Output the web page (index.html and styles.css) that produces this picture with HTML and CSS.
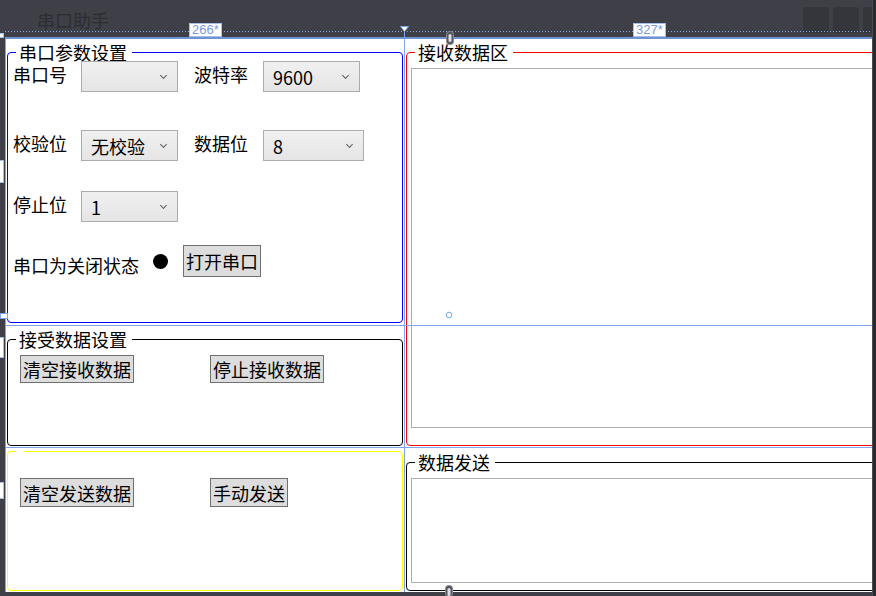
FILE: index.html
```html
<!DOCTYPE html>
<html lang="zh-CN">
<head>
    <meta charset="UTF-8">
    <meta name="viewport" content="width=device-width, initial-scale=1.0">
    <title>串口助手</title>
    <link rel="stylesheet" href="styles.css">
</head>
<body>
    <div class="frame">
        <div class="designer">
            <div class="titlebar">
                <span class="title">串口助手</span>
                <div class="winbtns"><span></span><span></span><span></span></div>
            </div>

            <div class="canvas">
                <!-- 串口参数 -->
                <fieldset class="group group-port">
                    <legend>串口参数设置</legend>
                    <div class="port-body">
                        <div class="row row-a">
                            <label class="lbl">串口号</label>
                            <div class="combo"><span class="val"></span><span class="chev"></span></div>
                            <label class="lbl lbl-2">波特率</label>
                            <div class="combo"><span class="val">9600</span><span class="chev"></span></div>
                        </div>
                        <div class="row row-b">
                            <label class="lbl">校验位</label>
                            <div class="combo"><span class="val">无校验</span><span class="chev"></span></div>
                            <label class="lbl lbl-2">数据位</label>
                            <div class="combo combo-wide"><span class="val">8</span><span class="chev"></span></div>
                        </div>
                        <div class="row row-c">
                            <label class="lbl">停止位</label>
                            <div class="combo"><span class="val">1</span><span class="chev"></span></div>
                        </div>
                        <div class="row row-d">
                            <span class="status">串口为关闭状态</span>
                            <span class="led"></span>
                            <button class="btn btn-open">打开串口</button>
                        </div>
                    </div>
                </fieldset>

                <!-- 接收数据区 -->
                <fieldset class="group group-recv">
                    <legend>接收数据区</legend>
                    <div class="box-body recv-body">
                        <textarea class="textbox" readonly></textarea>
                    </div>
                </fieldset>

                <!-- 接受数据设置 -->
                <fieldset class="group group-recvset">
                    <legend>接受数据设置</legend>
                    <div class="btn-row recvset-body">
                        <button class="btn">清空接收数据</button>
                        <button class="btn">停止接收数据</button>
                    </div>
                </fieldset>

                <!-- 发送按钮 -->
                <fieldset class="group group-sendset">
                    <legend></legend>
                    <div class="btn-row sendset-body">
                        <button class="btn">清空发送数据</button>
                        <button class="btn">手动发送</button>
                    </div>
                </fieldset>

                <!-- 数据发送 -->
                <fieldset class="group group-send">
                    <legend>数据发送</legend>
                    <div class="box-body send-body">
                        <textarea class="textbox" readonly></textarea>
                    </div>
                </fieldset>
            </div>

            <!-- designer adorners -->
            <div class="adorn dots"></div>
            <div class="adorn vline"></div>
            <div class="adorn hline hline-1"></div>
            <div class="adorn hline hline-2"></div>
            <span class="adorn size-tag tag-left">266*</span>
            <span class="adorn size-tag tag-right">327*</span>
            <svg class="adorn marker" width="9" height="6" viewBox="0 0 9 6">
                <path d="M0.5 0.5 H8.5 L4.5 5.5 Z" fill="#fff" stroke="#7fa5ec"/>
            </svg>
            <svg class="adorn grip grip-top" width="8" height="14" viewBox="0 0 8 14">
                <rect x="0.5" y="0.5" width="7" height="13" rx="3" fill="#55565c" stroke="#8a8b90"/>
                <rect x="2.5" y="3" width="3" height="8" rx="1.5" fill="#d8dce6"/>
            </svg>
            <svg class="adorn grip grip-bottom" width="8" height="11" viewBox="0 0 8 11">
                <rect x="0.5" y="0.5" width="7" height="11" rx="3" fill="#55565c" stroke="#8a8b90"/>
                <rect x="2.5" y="3" width="3" height="8" rx="1.5" fill="#d8dce6"/>
            </svg>
            <svg class="adorn ring" width="8" height="8" viewBox="0 0 8 8">
                <circle cx="4" cy="4" r="2.8" fill="#fff" stroke="#7fa5ec"/>
            </svg>
            <span class="adorn side side-1"></span>
            <span class="adorn side side-2"></span>
            <span class="adorn side side-3"></span>
            <span class="adorn side side-4"></span>
            <span class="adorn side-icon"></span>
        </div>
        <div class="edge"></div>
    </div>
</body>
</html>
```

FILE: styles.css
```css
* {
    box-sizing: border-box;
}

body {
    margin: 0;
    background-color: #3f4047;
    font-family: "Noto Sans CJK SC", "Microsoft YaHei", sans-serif;
    font-size: 18px;
    color: #000;
    overflow: hidden;
}

.frame {
    display: flex;
    width: 876px;
    height: 596px;
}

.designer {
    position: relative;
    width: 872px;
    height: 596px;
}

.edge {
    width: 4px;
    background-color: #2a2a2e;
    border-left: 1px solid #4b4c53;
}

/* title bar */
.titlebar {
    display: flex;
    height: 37px;
    padding-left: 37px;
    overflow: hidden;
}

.title {
    padding-top: 9px;
    line-height: 22px;
    color: #2c2d32;
}

.winbtns {
    display: flex;
    gap: 4px;
    margin-left: auto;
    margin-top: 7px;
    margin-right: -17px;
}

.winbtns span {
    width: 26px;
    height: 26px;
    border-radius: 3px;
    background-color: #35363b;
}

/* designer surface */
.canvas {
    display: grid;
    grid-template-columns: 399px 1fr;
    grid-template-rows: 287px 122px 1fr;
    height: 555px;
    margin-left: 5px;
    border-top: 2px solid #6d93d3;
    border-left: 1px solid #7fa5ec;
    background-color: #fff;
    overflow: hidden;
}

.group {
    display: flex;
    flex-direction: column;
    min-width: 0;
    margin: 0;
    padding: 0;
    border: 1px solid #000;
    border-radius: 4px;
}

.group legend {
    margin-left: 8px;
    padding: 0 5px 0 3px;
    font-size: 18px;
    line-height: 18px;
}

.group-port {
    grid-column: 1;
    grid-row: 1;
    margin: 4px 2px 3px 1px;
    border-color: #0000ff;
}

.group-recv {
    grid-column: 2;
    grid-row: 1 / 3;
    margin: 4px -30px 2px 1px;
    border-color: #ff0000;
}

.group-recvset {
    grid-column: 1;
    grid-row: 2;
    margin: 4px 2px 2px 1px;
}

.group-sendset {
    grid-column: 1;
    grid-row: 3;
    margin: 3px 2px 1px 1px;
    border-color: #ffff00;
}

.group-sendset legend {
    padding: 0 4px;
}

.group-send {
    grid-column: 2;
    grid-row: 3;
    margin: 5px -30px 1px 1px;
}

/* port settings */
.port-body {
    padding-left: 5px;
}

.row {
    display: flex;
    align-items: center;
    height: 31px;
}

.row-b {
    margin-top: 38px;
}

.row-c {
    margin-top: 30px;
}

.row-d {
    height: 32px;
    margin-top: 23px;
}

.lbl {
    width: 68px;
    line-height: 18px;
    margin-bottom: 6px;
}

.lbl-2 {
    width: 69px;
    margin-left: 16px;
}

.combo {
    display: flex;
    align-items: center;
    width: 97px;
    height: 31px;
    padding: 0 11px 0 9px;
    border: 1px solid #acacac;
    background: linear-gradient(#f0f0f0, #e5e5e5);
    line-height: 22px;
}

.combo-wide {
    width: 101px;
}

.combo .val {
    flex: 1;
}

.chev {
    width: 5px;
    height: 5px;
    margin-bottom: 3px;
    border-right: 1.5px solid #5f5f5f;
    border-bottom: 1.5px solid #5f5f5f;
    transform: rotate(45deg);
}

.status {
    line-height: 22px;
    margin-top: 8px;
}

.led {
    width: 15px;
    height: 15px;
    margin-left: 14px;
    border-radius: 50%;
    background-color: #000;
}

/* buttons */
.btn {
    height: 28px;
    padding: 0 2px;
    border: 1px solid #707070;
    background-color: #dddddd;
    font-family: inherit;
    font-size: 18px;
    line-height: 22px;
    color: #000;
}

.btn-open {
    height: 32px;
    margin-left: 15px;
}

.btn-row {
    display: flex;
    align-items: flex-start;
    padding-left: 12px;
}

.btn-row .btn + .btn {
    margin-left: 76px;
}

.recvset-body {
    padding-top: 7px;
}

.sendset-body {
    padding-top: 26px;
}

.sendset-body .btn {
    height: 29px;
}

/* text areas */
.box-body {
    display: flex;
    flex-direction: column;
    flex: 1;
    padding-left: 4px;
}

.recv-body {
    padding-top: 7px;
    padding-bottom: 17px;
}

.send-body {
    padding-top: 7px;
    padding-bottom: 7px;
}

.textbox {
    flex: 1;
    width: 100%;
    margin: 0;
    border: 1px solid #abadb3;
    background-color: #fff;
    resize: none;
}

/* designer adorners */
.adorn {
    position: absolute;
}

.dots {
    top: 31px;
    left: 5px;
    right: 0;
    height: 1px;
    background: repeating-linear-gradient(90deg, #86a4e8 0 1px, transparent 1px 3px);
}

.vline {
    top: 31px;
    bottom: 4px;
    left: 404px;
    width: 1px;
    background-color: #7fa5ec;
}

.hline {
    left: 6px;
    right: 0;
    height: 1px;
    background-color: #7fa5ec;
}

.hline-1 {
    top: 325px;
}

.hline-2 {
    top: 447px;
}

.size-tag {
    top: 23px;
    height: 14px;
    padding: 0 2px;
    border: 1px solid #a9bdea;
    background-color: #fff;
    font-family: "Liberation Sans", Arial, sans-serif;
    font-size: 13px;
    line-height: 12px;
    color: #7b99df;
}

.tag-left {
    left: 189px;
}

.tag-right {
    left: 633px;
}

.marker {
    top: 26px;
    left: 400px;
}

.grip-top {
    top: 31px;
    left: 446px;
}

.grip-bottom {
    top: 585px;
    left: 445px;
}

.ring {
    top: 311px;
    left: 445px;
}

.side {
    left: 0;
    width: 4px;
    background-color: #fff;
    border: 1px solid #a9bdea;
    border-left: none;
}

.side-1 {
    top: 160px;
    height: 23px;
}

.side-2 {
    top: 337px;
    height: 21px;
}

.side-3 {
    top: 482px;
    height: 17px;
}

.side-4 {
    top: 33px;
    height: 5px;
}

.side-icon {
    top: 313px;
    left: 0;
    width: 8px;
    height: 6px;
    border: 1px solid #7fa5ec;
    background-color: #fff;
}
```
